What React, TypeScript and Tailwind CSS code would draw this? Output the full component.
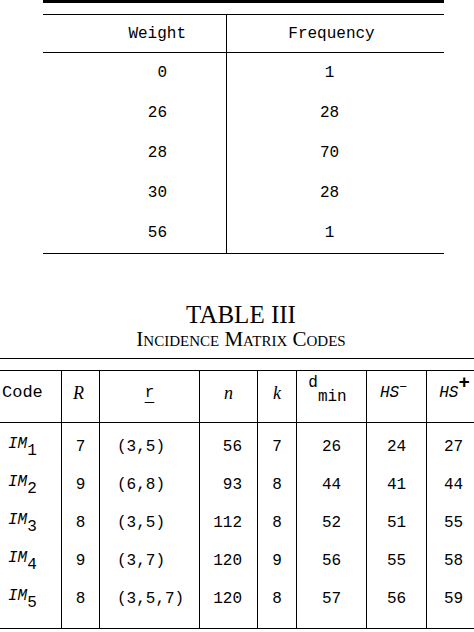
const mono = "font-['Liberation_Mono',monospace]";
const serif = "font-['Liberation_Serif',serif]";

const weights = [
  { w: "0", f: "1" },
  { w: "26", f: "28" },
  { w: "28", f: "70" },
  { w: "30", f: "28" },
  { w: "56", f: "1" },
];

const codes = [
  { i: "1", R: "7", r: "(3,5)", n: "56", k: "7", d: "26", lo: "24", hi: "27" },
  { i: "2", R: "9", r: "(6,8)", n: "93", k: "8", d: "44", lo: "41", hi: "44" },
  { i: "3", R: "8", r: "(3,5)", n: "112", k: "8", d: "52", lo: "51", hi: "55" },
  { i: "4", R: "9", r: "(3,7)", n: "120", k: "9", d: "56", lo: "55", hi: "58" },
  { i: "5", R: "8", r: "(3,5,7)", n: "120", k: "8", d: "57", lo: "56", hi: "59" },
];

// per-column alignment for the incidence table body
const align = [
  "justify-start pl-[8px]",
  "justify-center",
  "justify-start pl-[17px]",
  "justify-end pr-[15px]",
  "justify-center",
  "justify-center",
  "justify-center",
  "justify-center pl-[6px]",
];

const headAlign = [
  "justify-start pl-[2px]",
  "justify-center pr-[4px]",
  "justify-center",
  "justify-center",
  "justify-center",
  "justify-center pr-[8px]",
  "justify-center pr-[6px]",
  "justify-center pl-[8px]",
];

function WeightTable() {
  return (
    <div className="pl-[43px]">
      <div className="w-[401px]">
        <div className="h-[3px] bg-black" />
        <div className="mt-[11px] flex border-t border-b border-black">
          <div className="w-[184px] border-r border-black">
            <div className="h-[38px] flex items-center justify-end pr-[40px] border-b border-black">
              Weight
            </div>
            {weights.map((r, i) => (
              <div key={i} className="h-[40px] flex items-center justify-end pr-[59px]">
                {r.w}
              </div>
            ))}
          </div>
          <div className="flex-1">
            <div className="h-[38px] flex items-center justify-center pr-[8px] border-b border-black">
              Frequency
            </div>
            {weights.map((r, i) => (
              <div key={i} className="h-[40px] flex items-center justify-center pr-[12px]">
                {r.f}
              </div>
            ))}
          </div>
        </div>
      </div>
    </div>
  );
}

function Cell({
  col,
  head,
  className,
  children,
}: {
  col: number;
  head?: boolean;
  className?: string;
  children?: React.ReactNode;
}) {
  return (
    <div
      className={
        "flex items-center " +
        (head ? headAlign[col] : align[col]) +
        (col < 7 ? " border-r border-black " : " ") +
        (className ?? "")
      }
    >
      {children}
    </div>
  );
}

function CodesTable() {
  const head: React.ReactNode[] = [
    <span className="text-[17px]">Code</span>,
    <i className={serif + " text-[18px]"}>R</i>,
    <span className="underline underline-offset-[5px]">r</span>,
    <i className={serif + " text-[18px]"}>n</i>,
    <i className={serif + " text-[18px]"}>k</i>,
    <span className="flex items-start">
      <span className="-mt-[6px]">d</span>
      <span className="mt-[8px]">min</span>
    </span>,
    <span>
      <i>HS</i>
      <sup className="text-[13px]">−</sup>
    </span>,
    <span>
      <i>HS</i>
      <sup className="text-[19px] font-bold">+</sup>
    </span>,
  ];

  return (
    <div>
      <div className={serif + " mt-[49px] flex flex-col items-center pl-[8px] text-black"}>
        <div className="text-[25px] leading-[24px]">TABLE III</div>
        <div className="text-[21px] leading-[24px] [font-variant:small-caps]">
          Incidence Matrix Codes
        </div>
      </div>
      <div className="mt-[7px] h-[13px] border-y border-black" />
      <div className="grid grid-cols-[62px_38px_100px_58px_39px_70px_60px_47px] border-b border-black">
        {head.map((h, c) => (
          <Cell key={"h" + c} col={c} head className="h-[52px] pb-[7px] border-b">
            {h}
          </Cell>
        ))}
        {codes.map((r, ri) =>
          [
            <span>
              <i>IM</i>
              <span className="align-[-7px]">{r.i}</span>
            </span>,
            r.R,
            r.r,
            r.n,
            r.k,
            r.d,
            r.lo,
            r.hi,
          ].map((v, c) => (
            <Cell
              key={ri + "-" + c}
              col={c}
              className={ri === 0 ? "h-[43px] pt-[5px]" : "h-[38px]"}
            >
              {v}
            </Cell>
          ))
        )}
        {Array.from({ length: 8 }).map((_, c) => (
          <Cell key={"s" + c} col={c} className="h-[10px]" />
        ))}
      </div>
    </div>
  );
}

export default function App() {
  return (
    <div className={mono + " w-[474px] h-[632px] overflow-hidden bg-white text-[16px] text-black"}>
      <WeightTable />
      <CodesTable />
    </div>
  );
}
